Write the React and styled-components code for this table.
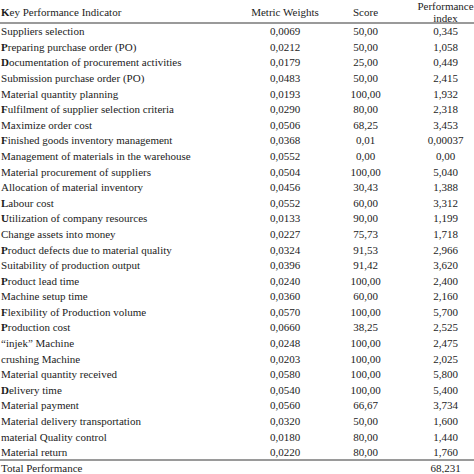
import React from 'react';
import styled, { createGlobalStyle } from 'styled-components';

const GlobalStyle = createGlobalStyle`
  html, body {
    margin: 0;
    padding: 0;
    background: #ffffff;
    overflow: hidden;
  }
  body {
    font-family: "Liberation Serif", "Times New Roman", serif;
    color: #1c1c1c;
  }
`;

const Table = styled.div`
  width: 484px;
  font-size: 11px;
`;

const Row = styled.div`
  display: grid;
  grid-template-columns: 246px 78px 83px 77px;
  align-items: center;
  height: ${(props) => props.h || 15.6}px;
  line-height: ${(props) => props.h || 15.6}px;
  border-bottom: ${(props) => (props.ruled ? '2px solid #9a9a9a' : 'none')};
  border-top: ${(props) => (props.ruledTop ? '2px solid #9a9a9a' : 'none')};
  margin-top: ${(props) => (props.ruledTop ? '-2px' : '0')};
  box-sizing: border-box;
`;

const Label = styled.div`
  padding-left: 1px;
  white-space: nowrap;
  &::first-letter {
    font-weight: ${(props) => (props.strong ? 700 : 400)};
  }
`;

const Num = styled.div`
  text-align: center;
  white-space: nowrap;
`;

const Stack = styled.div`
  text-align: center;
  line-height: 12px;
  white-space: nowrap;
`;

const rows = [
  ['Suppliers selection', '0,0069', '50,00', '0,345', false],
  ['Preparing purchase order (PO)', '0,0212', '50,00', '1,058', true],
  ['Documentation of procurement activities', '0,0179', '25,00', '0,449', true],
  ['Submission purchase order (PO)', '0,0483', '50,00', '2,415', false],
  ['Material quantity planning', '0,0193', '100,00', '1,932', false],
  ['Fulfilment of supplier selection criteria', '0,0290', '80,00', '2,318', true],
  ['Maximize order cost', '0,0506', '68,25', '3,453', false],
  ['Finished goods inventory management', '0,0368', '0,01', '0,00037', true],
  ['Management of materials in the warehouse', '0,0552', '0,00', '0,00', false],
  ['Material procurement of suppliers', '0,0504', '100,00', '5,040', false],
  ['Allocation of material inventory', '0,0456', '30,43', '1,388', false],
  ['Labour cost', '0,0552', '60,00', '3,312', true],
  ['Utilization of company resources', '0,0133', '90,00', '1,199', true],
  ['Change assets into money', '0,0227', '75,73', '1,718', false],
  ['Product defects due to material quality', '0,0324', '91,53', '2,966', true],
  ['Suitability of production output', '0,0396', '91,42', '3,620', false],
  ['Product lead time', '0,0240', '100,00', '2,400', true],
  ['Machine setup time', '0,0360', '60,00', '2,160', false],
  ['Flexibility of Production volume', '0,0570', '100,00', '5,700', true],
  ['Production cost', '0,0660', '38,25', '2,525', true],
  ['\u201cinjek\u201d Machine', '0,0248', '100,00', '2,475', false],
  ['crushing Machine', '0,0203', '100,00', '2,025', false],
  ['Material quantity received', '0,0580', '100,00', '5,800', false],
  ['Delivery time', '0,0540', '100,00', '5,400', true],
  ['Material payment', '0,0560', '66,67', '3,734', false],
  ['Material delivery transportation', '0,0320', '50,00', '1,600', false],
  ['material Quality control', '0,0180', '80,00', '1,440', false],
  ['Material return', '0,0220', '80,00', '1,760', false],
];

export default function App() {
  return (
    <>
      <GlobalStyle />
      <Table>
        <Row h={24.2} ruled>
          <Label strong>Key Performance Indicator</Label>
          <Num>Metric Weights</Num>
          <Num>Score</Num>
          <Stack>
            Performance
            <br />
            index
          </Stack>
        </Row>
        {rows.map(([name, weight, score, index, strong]) => (
          <Row key={name}>
            <Label strong={strong}>{name}</Label>
            <Num>{weight}</Num>
            <Num>{score}</Num>
            <Num>{index}</Num>
          </Row>
        ))}
        <Row h={14} ruledTop>
          <Label>Total Performance</Label>
          <Num />
          <Num />
          <Num>68,231</Num>
        </Row>
      </Table>
    </>
  );
}
